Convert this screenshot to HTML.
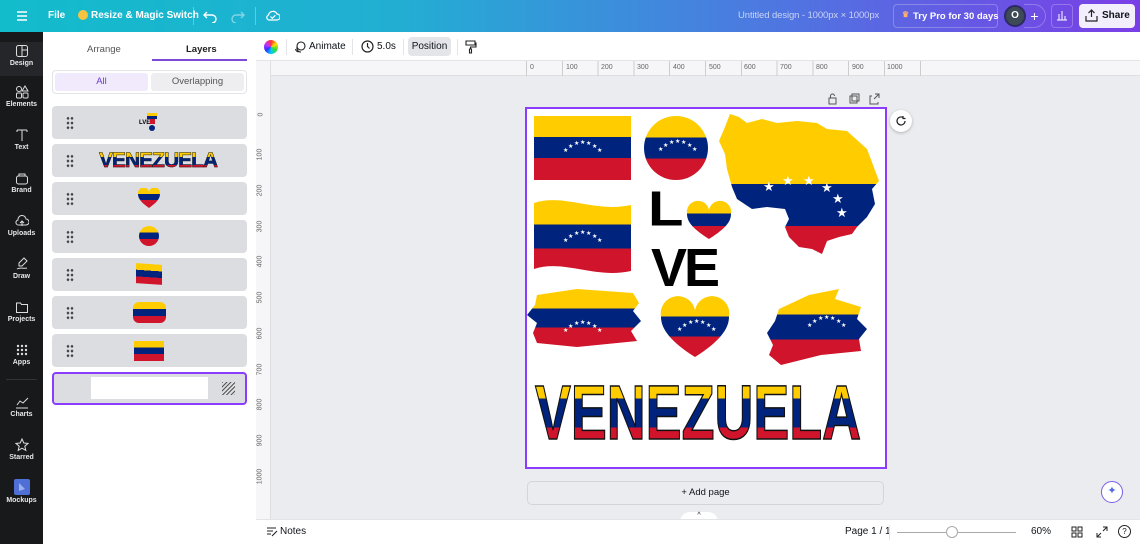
<!DOCTYPE html>
<html><head><meta charset="utf-8"><style>
*{box-sizing:border-box;margin:0;padding:0}
body{width:1140px;height:544px;overflow:hidden;font-family:"Liberation Sans",sans-serif;background:#ebecf0;position:relative;font-size:11px;color:#0e1318}
.abs{position:absolute;white-space:nowrap}
#top{left:0;top:0;width:1140px;height:32px;background:linear-gradient(90deg,#12bccb 0%,#22aed3 35%,#4a7ce0 65%,#7a3ee6 100%);color:#fff;font-weight:bold}
#side{left:0;top:32px;width:43px;height:512px;background:#18191b;color:#e8e8e8}
.si{position:absolute;left:0;width:43px;text-align:center;font-size:7px;font-weight:bold}
.si svg{display:block;margin:0 auto 2px}
#panel{left:43px;top:32px;width:213px;height:512px;background:#fff}
.layer{position:absolute;left:9px;width:195px;height:33px;background:#dcdde1;border-radius:4px}
.dots{position:absolute;left:14px;top:10px;width:8px;height:14px;background:radial-gradient(circle,#444 1.2px,transparent 1.4px) 0 0/4px 4.7px}
#tool{left:256px;top:32px;width:884px;height:29px;background:#fff;border-bottom:1px solid #e3e4e8}
#rulerT{left:270px;top:61px;width:870px;height:15px;background:#f6f6f8;border-bottom:1px solid #dedfe3;font-size:7px;color:#666}
#rulerL{left:256px;top:61px;width:15px;height:458px;background:#f6f6f8;border-right:1px solid #dedfe3;font-size:7px;color:#666}
#page{left:525px;top:107px;width:362px;height:362px;background:#fff;border:2px solid #8b3dff}
#bot{left:256px;top:519px;width:884px;height:25px;background:#fff;border-top:1px solid #e3e4e8}
</style></head><body>
<div id="top" class="abs">
 <svg class="abs" style="left:16px;top:10px" width="12" height="12"><path d="M1 2h10M1 6h10M1 10h10" stroke="#fff" stroke-width="1.4"/></svg>
 <div class="abs" style="left:48px;top:10px;font-size:10px">File</div>
 <div class="abs" style="left:78px;top:10px;width:10px;height:10px;border-radius:50%;background:#f5c342"></div>
 <div class="abs" style="left:91px;top:10px;font-size:10px">Resize &amp; Magic Switch</div>
 <div class="abs" style="left:193px;top:7px;width:1px;height:18px;background:rgba(255,255,255,.3)"></div>
 <svg class="abs" style="left:203px;top:9px" width="14" height="14"><path d="M4 3L1 6l3 3M1 6h8a4 4 0 010 8" stroke="#fff" stroke-width="1.4" fill="none"/></svg>
 <svg class="abs" style="left:231px;top:9px" width="14" height="14" opacity=".45"><path d="M10 3l3 3-3 3M13 6H5a4 4 0 000 8" stroke="#fff" stroke-width="1.4" fill="none"/></svg>
 <div class="abs" style="left:255px;top:7px;width:1px;height:18px;background:rgba(255,255,255,.3)"></div>
 <svg class="abs" style="left:265px;top:9px" width="15" height="13"><path d="M4 11h8a3 3 0 000-6 4.5 4.5 0 00-8.5 1A2.6 2.6 0 004 11z M5.5 7.5l1.8 1.8 3-3" stroke="#fff" stroke-width="1.2" fill="none"/></svg>
 <div class="abs" style="left:738px;top:10px;font-size:9.5px;font-weight:normal;color:#c9d3f5;letter-spacing:-.1px">Untitled design - 1000px × 1000px</div>
 <div class="abs" style="left:893px;top:4px;width:105px;height:24px;border:1px solid rgba(255,255,255,.25);border-radius:4px;font-size:9.5px;padding:6px 0 0 19px">Try Pro for 30 days</div>
 <div class="abs" style="left:902px;top:10px;color:#ffb06b;font-size:8px">♛</div>
 <div class="abs" style="left:1004px;top:5px;width:22px;height:22px;border-radius:50%;background:#3c4b55;border:2px solid #2e2a66;text-align:center;font-size:10px;line-height:18px;z-index:2">O</div>
 <div class="abs" style="left:1024px;top:4px;width:22px;height:24px;border:1px solid rgba(255,255,255,.25);border-left:none;border-radius:0 12px 12px 0;text-align:center;font-size:14px;line-height:22px;font-weight:normal">+</div>
 <div class="abs" style="left:1051px;top:4px;width:22px;height:24px;border:1px solid rgba(255,255,255,.25);border-radius:4px"></div>
 <svg class="abs" style="left:1056px;top:9px" width="12" height="12"><path d="M1 11h10M3 11V5M6 11V2M9 11V7" stroke="#fff" stroke-width="1"/></svg>
 <div class="abs" style="left:1079px;top:4px;width:56px;height:24px;background:#f3eefc;border-radius:4px;color:#0e1318;font-size:10px;padding:6px 0 0 23px">Share</div>
 <svg class="abs" style="left:1085px;top:9px" width="13" height="13"><path d="M6.5 8V1M3.5 4l3-3 3 3M1 7v5h11V7" stroke="#222" stroke-width="1.2" fill="none"/></svg>
</div>

<div id="side" class="abs">
 <div class="si" style="top:10px;background:#25262a;height:34px;padding-top:2px"><svg width="14" height="14"><rect x="1.5" y="1.5" width="11" height="11" rx="2" fill="none" stroke="#ddd"/><path d="M7 1.5v11M7 6h5.5" stroke="#ddd"/></svg>Design</div>
 <div class="si" style="top:53px"><svg width="14" height="14"><circle cx="4" cy="4" r="2.5" fill="none" stroke="#ddd"/><path d="M10 1l3 5H7z" fill="none" stroke="#ddd"/><rect x="1.5" y="8" width="5" height="5" rx="1" fill="none" stroke="#ddd"/><rect x="8" y="8" width="5" height="5" rx="1" fill="none" stroke="#ddd"/></svg>Elements</div>
 <div class="si" style="top:96px"><svg width="14" height="14"><path d="M2 2h10M7 2v11M2 2v2M12 2v2" stroke="#ddd"/></svg>Text</div>
 <div class="si" style="top:139px"><svg width="14" height="14"><rect x="1.5" y="5" width="11" height="8" rx="2" fill="none" stroke="#ddd"/><path d="M4 5V3h6v2" stroke="#ddd" fill="none"/></svg>Brand</div>
 <div class="si" style="top:182px"><svg width="14" height="14"><path d="M4 11h7a3 3 0 000-6 4 4 0 00-8 1 2.5 2.5 0 001 5zM7 12V7M5 9l2-2 2 2" stroke="#ddd" fill="none"/></svg>Uploads</div>
 <div class="si" style="top:225px"><svg width="14" height="14"><path d="M9 1l3 3-5 5H4V6zM2 12c3-2 6 0 10-1" stroke="#ddd" fill="none"/></svg>Draw</div>
 <div class="si" style="top:268px"><svg width="14" height="14"><path d="M1.5 3h4l1 1.5h6v8h-11z" stroke="#ddd" fill="none"/></svg>Projects</div>
 <div class="si" style="top:311px"><svg width="14" height="14"><g fill="#ddd"><circle cx="3" cy="3" r="1.2"/><circle cx="7" cy="3" r="1.2"/><circle cx="11" cy="3" r="1.2"/><circle cx="3" cy="7" r="1.2"/><circle cx="7" cy="7" r="1.2"/><circle cx="11" cy="7" r="1.2"/><circle cx="3" cy="11" r="1.2"/><circle cx="7" cy="11" r="1.2"/><circle cx="11" cy="11" r="1.2"/></g></svg>Apps</div>
 <div class="abs" style="left:6px;top:347px;width:31px;height:1px;background:#333"></div>
 <div class="si" style="top:363px"><svg width="14" height="14"><path d="M1 13h12M2 10l3-4 3 2 5-5" stroke="#ddd" fill="none"/></svg>Charts</div>
 <div class="si" style="top:406px"><svg width="14" height="14"><path d="M7 1l1.8 4 4.2.4-3.2 2.8 1 4.2L7 10.2 3.2 12.4l1-4.2L1 5.4 5.2 5z" stroke="#ddd" fill="none"/></svg>Starred</div>
 <div class="si" style="top:447px"><svg width="16" height="16"><rect width="16" height="16" rx="2" fill="#4f6fd6"/><path d="M5 4v8l6-2z" fill="#9ab0ef"/></svg>Mockups</div>
</div>

<div id="panel" class="abs">
 <div class="abs" style="left:44px;top:12px;font-size:9.5px;color:#555">Arrange</div>
 <div class="abs" style="left:143px;top:12px;font-size:9.5px;font-weight:bold;color:#222">Layers</div>
 <div class="abs" style="left:109px;top:27px;width:95px;height:2px;background:#7d4ad8"></div>
 <div class="abs" style="left:9px;top:38px;width:195px;height:24px;border:1px solid #e3e4e8;border-radius:4px;background:#fff"></div>
 <div class="abs" style="left:12px;top:41px;width:93px;height:18px;background:#f0eafc;border-radius:3px;text-align:center;line-height:18px;color:#6a3ccf;font-size:9.5px">All</div>
 <div class="abs" style="left:108px;top:41px;width:93px;height:18px;background:#eeeef1;border-radius:3px;text-align:center;line-height:18px;color:#555;font-size:9.5px">Overlapping</div>
 <div class="layer" style="top:74px"><div class="dots"></div>
  <svg class="abs" style="left:86px;top:6px" width="22" height="22"><rect x="9" y="1" width="10" height="3" fill="#fc0"/><rect x="9" y="4" width="10" height="3" fill="#00247d"/><rect x="12" y="7" width="5" height="5" fill="#cf142b"/><text x="1" y="12" font-size="6" font-weight="bold" font-family="Liberation Sans">LVE</text><rect x="11" y="13" width="6" height="6" rx="3" fill="#00247d"/></svg></div>
 <div class="layer" style="top:112px"><div class="dots"></div>
  <div class="abs" style="left:47px;top:5px;font-size:21px;font-weight:bold;letter-spacing:-1px;background:linear-gradient(#fc0 33%,#00247d 33% 66%,#cf142b 66%);-webkit-background-clip:text;color:transparent;-webkit-text-stroke:.5px #222">VENEZUELA</div></div>
 <div class="layer" style="top:150px"><div class="dots"></div>
  <svg class="abs" style="left:86px;top:6px" width="22" height="21" viewBox="0 0 22 21"><defs><linearGradient id="g" x1="0" y1="0" x2="0" y2="1"><stop offset=".33" stop-color="#fc0"/><stop offset=".33" stop-color="#00247d"/><stop offset=".6" stop-color="#00247d"/><stop offset=".6" stop-color="#cf142b"/></linearGradient></defs><path d="M11 20C4 15 0 11 0 6a5.5 5.5 0 0111-2 5.5 5.5 0 0111 2c0 5-4 9-11 14z" fill="url(#g)"/></svg></div>
 <div class="layer" style="top:188px"><div class="dots"></div>
  <div class="abs" style="left:87px;top:6px;width:20px;height:20px;border-radius:50%;background:linear-gradient(#fc0 33%,#00247d 33% 66%,#cf142b 66%)"></div></div>
 <div class="layer" style="top:226px"><div class="dots"></div>
  <div class="abs" style="left:84px;top:6px;width:26px;height:20px;background:linear-gradient(#fc0 33%,#00247d 33% 66%,#cf142b 66%);transform:skewY(4deg)"></div></div>
 <div class="layer" style="top:264px"><div class="dots"></div>
  <div class="abs" style="left:81px;top:6px;width:33px;height:21px;border-radius:6px;background:linear-gradient(#fc0 33%,#00247d 33% 66%,#cf142b 66%)"></div></div>
 <div class="layer" style="top:302px"><div class="dots"></div>
  <div class="abs" style="left:82px;top:7px;width:30px;height:20px;background:linear-gradient(#fc0 33%,#00247d 33% 66%,#cf142b 66%)"></div></div>
 <div class="layer" style="top:340px;border:2px solid #8b3dff;height:33px">
  <div class="abs" style="left:37px;top:3px;width:117px;height:22px;background:#fff"></div>
  <div class="abs" style="left:168px;top:8px;width:13px;height:13px;background:repeating-linear-gradient(135deg,#555 0 1px,transparent 1px 3px)"></div></div>
</div>

<div id="tool" class="abs">
 <div class="abs" style="left:8px;top:8px;width:14px;height:14px;border-radius:50%;background:conic-gradient(#f33,#fd0,#3d3,#0cf,#33f,#c3f,#f33)"></div>
 <div class="abs" style="left:30px;top:7px;width:1px;height:16px;background:#e3e4e8"></div>
 <svg class="abs" style="left:38px;top:9px" width="12" height="12"><circle cx="7" cy="5" r="4" fill="none" stroke="#222" stroke-width="1.1"/><path d="M3 6a4 4 0 004 5M1.5 8a4 4 0 003 3" stroke="#222" fill="none"/></svg>
 <div class="abs" style="left:53px;top:9px;font-size:10px">Animate</div>
 <div class="abs" style="left:96px;top:7px;width:1px;height:16px;background:#e3e4e8"></div>
 <svg class="abs" style="left:105px;top:8px" width="13" height="13"><circle cx="6.5" cy="6.5" r="5.5" fill="none" stroke="#222" stroke-width="1.2"/><path d="M6.5 3v3.5l2 2" stroke="#222" fill="none" stroke-width="1.2"/></svg>
 <div class="abs" style="left:121px;top:9px;font-size:10px">5.0s</div>
 <div class="abs" style="left:147px;top:7px;width:1px;height:16px;background:#e3e4e8"></div>
 <div class="abs" style="left:152px;top:5px;width:43px;height:19px;background:#e4e5e9;border-radius:4px;text-align:center;line-height:19px;font-size:10px">Position</div>
 <div class="abs" style="left:201px;top:7px;width:1px;height:16px;background:#e3e4e8"></div>
 <svg class="abs" style="left:209px;top:8px" width="12" height="14"><path d="M1 1h9v4H1zM10 3h1v4H5.5v2M4.5 9h2v4h-2z" stroke="#222" fill="none" stroke-width="1.1"/></svg>
</div>

<div id="rulerT" class="abs">
 <div class="abs" style="left:256px;top:0;width:400px;height:15px;background:repeating-linear-gradient(90deg,#ccc 0 1px,transparent 1px 35.8px)"></div>
 <div class="abs" style="left:260px;top:3px">0</div>
 <div class="abs" style="left:296px;top:3px">100</div><div class="abs" style="left:331px;top:3px">200</div><div class="abs" style="left:367px;top:3px">300</div><div class="abs" style="left:403px;top:3px">400</div><div class="abs" style="left:439px;top:3px">500</div><div class="abs" style="left:474px;top:3px">600</div><div class="abs" style="left:510px;top:3px">700</div><div class="abs" style="left:546px;top:3px">800</div><div class="abs" style="left:582px;top:3px">900</div><div class="abs" style="left:617px;top:3px">1000</div>
</div>
<div id="rulerL" class="abs">
 <div class="abs" style="left:3px;top:50px;transform:rotate(-90deg)">0</div>
 <div class="abs" style="left:-2px;top:90px;transform:rotate(-90deg)">100</div><div class="abs" style="left:-2px;top:126px;transform:rotate(-90deg)">200</div><div class="abs" style="left:-2px;top:162px;transform:rotate(-90deg)">300</div><div class="abs" style="left:-2px;top:197px;transform:rotate(-90deg)">400</div><div class="abs" style="left:-2px;top:233px;transform:rotate(-90deg)">500</div><div class="abs" style="left:-2px;top:269px;transform:rotate(-90deg)">600</div><div class="abs" style="left:-2px;top:305px;transform:rotate(-90deg)">700</div><div class="abs" style="left:-2px;top:340px;transform:rotate(-90deg)">800</div><div class="abs" style="left:-2px;top:376px;transform:rotate(-90deg)">900</div><div class="abs" style="left:-4px;top:412px;transform:rotate(-90deg)">1000</div>
</div>

<svg class="abs" style="left:827px;top:93px" width="55" height="12"><g stroke="#555" fill="none" stroke-width="1"><rect x="2" y="5" width="7" height="6"/><path d="M3.5 5V3a2 2 0 014 0"/><rect x="23" y="3" width="7" height="7"/><rect x="25" y="1" width="7" height="7"/><path d="M45 3h-2v8h8V9M48 1h4v4M52 1l-5 5"/></g></svg>
<div class="abs" style="left:890px;top:110px;width:22px;height:22px;border-radius:50%;background:#fff;box-shadow:0 1px 3px rgba(0,0,0,.25)"></div>
<svg class="abs" style="left:895px;top:115px" width="12" height="12"><path d="M10 6a4 4 0 11-2-3.5M8 1v2.5h2.5" stroke="#222" fill="none" stroke-width="1.2"/></svg>

<div id="page" class="abs">
<svg width="358" height="358" viewBox="0 0 358 358">
<defs>
<linearGradient id="vf" x1="0" y1="0" x2="0" y2="1"><stop offset=".333" stop-color="#fc0"/><stop offset=".333" stop-color="#00247d"/><stop offset=".666" stop-color="#00247d"/><stop offset=".666" stop-color="#cf142b"/></linearGradient>
<linearGradient id="vm" x1="0" y1="0" x2="0" y2="1"><stop offset=".5" stop-color="#fc0"/><stop offset=".5" stop-color="#00247d"/><stop offset=".8" stop-color="#00247d"/><stop offset=".8" stop-color="#cf142b"/></linearGradient>
<g id="st"><g fill="#fff" font-size="6" font-family="DejaVu Sans"><text x="0" y="10">★</text><text x="5" y="6">★</text><text x="11" y="3">★</text><text x="17" y="2">★</text><text x="23" y="3">★</text><text x="29" y="6">★</text><text x="34" y="10">★</text></g></g>
</defs>
<rect x="7" y="7" width="97" height="21" fill="#fc0"/><rect x="7" y="28" width="97" height="21" fill="#00247d"/><rect x="7" y="49" width="97" height="22" fill="#cf142b"/>
<use href="#st" x="36" y="33"/>
<circle cx="149" cy="39" r="32" fill="url(#vf)"/><use href="#st" x="131" y="32"/>
<path d="M192 32L198 18L203 5L212 8L220 14L235 10L250 14L270 12L290 14L300 20L320 22L340 40L352 72L345 80L348 95L340 108L330 118L325 125L312 128L300 132L295 145L285 140L272 138L262 128L258 118L262 110L258 100L240 98L225 100L210 90L205 78L200 60L198 45Z" fill="url(#vm)"/>
<g fill="#fff" font-size="13" font-family="DejaVu Sans"><text x="236" y="82">★</text><text x="255" y="76">★</text><text x="276" y="76">★</text><text x="294" y="83">★</text><text x="305" y="94">★</text><text x="309" y="108">★</text></g>
<path d="M7 94c30-10 60 10 97 2v66c-37 8-67-12-97-2z" fill="url(#vf)"/><use href="#st" x="36" y="123"/>
<text x="121" y="137" font-size="58" font-weight="bold" font-family="Liberation Sans" transform="scale(1,0.85)" style="transform-origin:0 0">L</text>
<path d="M182 130c-14-9-22-16-22-25a10 10 0 0122-4 10 10 0 0122 4c0 9-8 16-22 25z" fill="url(#vf)"/>
<text x="124" y="177" font-size="54" font-weight="bold" font-family="Liberation Sans" letter-spacing="-3">VE</text>
<path d="M10 186l40-6 56 4 6 10-6 8 8 10-10 10 6 10-60 6-40-4-4-10 4-10-10-8 8-10z" fill="url(#vf)"/><use href="#st" x="36" y="213"/>
<path d="M168 248c-24-15-34-28-34-40a17 17 0 0134-7 17 17 0 0134 7c0 12-10 25-34 40z" fill="url(#vf)"/><use href="#st" x="150" y="212"/>
<path d="M252 200l30-14 30-6-4 10 26 8-4 12 10 10-8 10 2 12-40 4-40 10-12-10 4-10-6-12 8-12z" fill="url(#vf)"/><use href="#st" x="280" y="208"/>
<text x="8" y="330" font-size="77" font-weight="bold" font-family="Liberation Sans" textLength="326" lengthAdjust="spacingAndGlyphs" fill="url(#vf)" stroke="#111" stroke-width="1.5">VENEZUELA</text>
</svg>
</div>

<div class="abs" style="left:527px;top:481px;width:357px;height:24px;border:1px solid #d4d5da;border-radius:5px;background:#ebecf0;text-align:center;line-height:22px;font-size:9.5px">+ Add page</div>
<div class="abs" style="left:680px;top:512px;width:38px;height:10px;background:#fff;border-radius:10px 10px 0 0;text-align:center;font-size:7px">^</div>
<div class="abs" style="left:1101px;top:481px;width:22px;height:22px;border-radius:50%;background:#fff;border:1.5px solid #7a5ee6;text-align:center;line-height:19px;color:#5168e6;font-size:11px">✦</div>

<div id="bot" class="abs">
 <svg class="abs" style="left:10px;top:7px" width="12" height="10"><path d="M1 1h9M1 4h6M1 7h4M6 9l5-5" stroke="#222" stroke-width="1.1"/></svg>
 <div class="abs" style="left:24px;top:6px;font-size:10px">Notes</div>
 <div class="abs" style="left:589px;top:6px;font-size:10px">Page 1 / 1</div>
 <div class="abs" style="left:633px;top:5px;width:1px;height:15px;background:#e3e4e8"></div>
 <div class="abs" style="left:641px;top:12px;width:119px;height:1px;background:#aaa"></div>
 <div class="abs" style="left:690px;top:6px;width:12px;height:12px;border-radius:50%;background:#fff;border:1px solid #aaa"></div>
 <div class="abs" style="left:775px;top:6px;font-size:10px">60%</div>
 <svg class="abs" style="left:815px;top:6px" width="12" height="12"><g fill="none" stroke="#222"><rect x="1" y="1" width="4" height="4"/><rect x="7" y="1" width="4" height="4"/><rect x="1" y="7" width="4" height="4"/><rect x="7" y="7" width="4" height="4"/></g></svg>
 <svg class="abs" style="left:840px;top:6px" width="12" height="12"><path d="M7 1h4v4M11 1L7 5M5 11H1V7M1 11l4-4" stroke="#222" fill="none"/></svg>
 <div class="abs" style="left:862px;top:5px;width:13px;height:13px;border-radius:50%;border:1.2px solid #222;text-align:center;font-size:8px;line-height:11px">?</div>
</div>
</body></html>
